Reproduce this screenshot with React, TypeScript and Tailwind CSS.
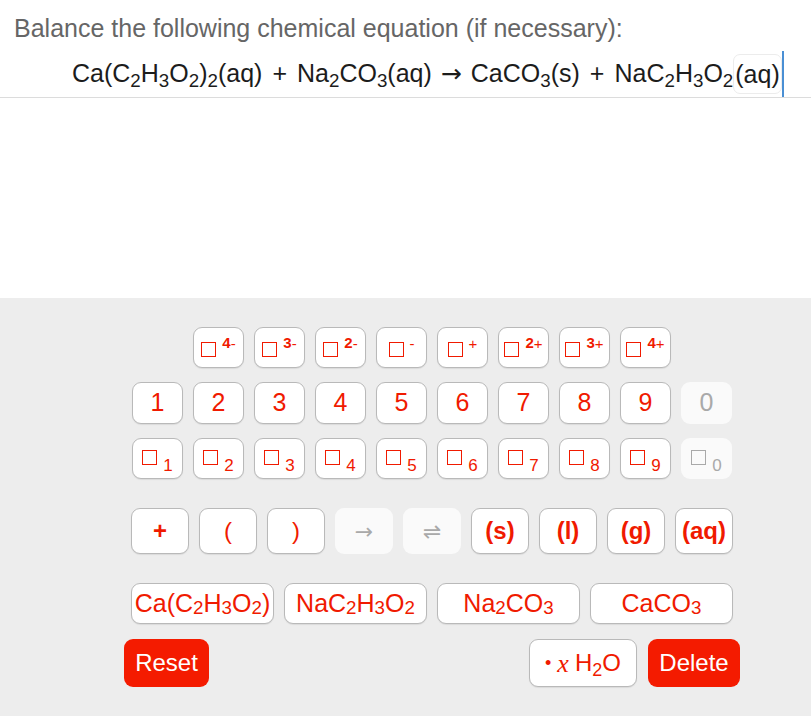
import type { ReactNode } from 'react'

const RED = 'text-[#f01a00]'
const KEY = 'bg-white border border-[#b9b9b9] rounded-[9px] shadow-[0_1px_1px_rgba(0,0,0,0.08)] flex items-center justify-center'
const OFF = 'bg-[#fafafa] rounded-[9px] flex items-center justify-center text-[#a9a9a9]'
const ARROW = { fontFamily: '"DejaVu Sans", sans-serif' }

const CHARGES: [string, string][] = [
  ['4', '-'], ['3', '-'], ['2', '-'], ['', '-'], ['', '+'], ['2', '+'], ['3', '+'], ['4', '+'],
]

function Box({ gray }: { gray?: boolean }) {
  return (
    <span
      className={`inline-block w-[15px] h-[15px] border-[1.5px] ${gray ? 'border-[#a9a9a9]' : 'border-[#f01a00]'}`}
    />
  )
}

function ChargeKey({ n, sign }: { n: string; sign: string }) {
  return (
    <button type="button" className={`w-[51px] h-[41px] ${KEY} ${RED}`}>
      <span className="mt-[4px] flex"><Box /></span>
      <span className="ml-[6px] -mt-[10px] text-[15px] leading-none flex items-start">
        <span className="font-bold">{n}</span>
        <span className="mt-[1px]">{sign}</span>
      </span>
    </button>
  )
}

function SubKey({ n, gray }: { n: number; gray?: boolean }) {
  return (
    <button type="button" className={`w-[51px] h-[41px] ${gray ? OFF : `${KEY} ${RED}`}`}>
      <span className="-mt-[2px] flex"><Box gray={gray} /></span>
      <span className="ml-[6px] mt-[14px] text-[17px] leading-none">{n}</span>
    </button>
  )
}

function Key({ children, w, bold, off, size = 'text-[25px]' }: { children: ReactNode; w: string; bold?: boolean; off?: boolean; size?: string }) {
  return (
    <button
      type="button"
      className={`${w} h-full ${size} ${bold ? 'font-bold' : ''} ${off ? OFF : `${KEY} ${RED}`} whitespace-nowrap`}
    >
      {children}
    </button>
  )
}

export default function App() {
  return (
    <div className="w-[811px] h-[716px] overflow-hidden bg-white" style={{ fontFamily: '"Liberation Sans", Arial, sans-serif' }}>
      <div className="h-[298px]">
        <div className="h-[51px] pt-[13px] pl-[14px] text-[25px] leading-[30px] text-[#666666] whitespace-nowrap">
          Balance the following chemical equation (if necessary):
        </div>
        <div className="h-[47px] flex items-center pl-[72px] border-b border-[#dcdcdc] text-[25px] text-[#1c1c1c] whitespace-nowrap">
          <span>
            Ca(C<sub>2</sub>H<sub>3</sub>O<sub>2</sub>)<sub>2</sub>(aq)<span className="px-[10px]">+</span>Na<sub>2</sub>CO<sub>3</sub>(aq)
            <span style={ARROW} className="px-[9px] text-[25px]">→</span>
            CaCO<sub>3</sub>(s)<span className="px-[10px]">+</span>NaC<sub>2</sub>H<sub>3</sub>O<sub>2</sub>
          </span>
          <span className="rounded-[7px] border border-[#ececec] px-[1px] leading-[38px]">(aq)</span>
          <span className="inline-block w-[2px] h-[46px] bg-[#4a8fd4]" />
        </div>
      </div>

      <div className="h-[418px] bg-[#ededed] pt-[29px]">
        <div className="ml-[124px] w-[616px] flex flex-col">
          <div className="flex justify-center gap-[10px]">
            {CHARGES.map(([n, s], i) => <ChargeKey key={i} n={n} sign={s} />)}
          </div>

          <div className="mt-[14px] h-[42px] flex justify-center gap-[10px]">
            {[1, 2, 3, 4, 5, 6, 7, 8, 9].map(d => (
              <Key key={d} w="w-[51px]">{d}</Key>
            ))}
            <Key w="w-[51px]" off>0</Key>
          </div>

          <div className="mt-[14px] flex justify-center gap-[10px]">
            {[1, 2, 3, 4, 5, 6, 7, 8, 9].map(d => <SubKey key={d} n={d} />)}
            <SubKey n={0} gray />
          </div>

          <div className="mt-[29px] h-[46px] flex justify-center gap-[10px]">
            <Key w="w-[58px]" bold size="text-[24px]">+</Key>
            <Key w="w-[58px]" size="text-[24px]">(</Key>
            <Key w="w-[58px]" size="text-[24px]">)</Key>
            <Key w="w-[58px]" off><span style={ARROW} className="text-[22px]">→</span></Key>
            <Key w="w-[58px]" off><span style={ARROW} className="text-[22px]">⇌</span></Key>
            <Key w="w-[58px]" bold size="text-[24px]">(s)</Key>
            <Key w="w-[58px]" bold size="text-[24px]">(l)</Key>
            <Key w="w-[58px]" bold size="text-[24px]">(g)</Key>
            <Key w="w-[58px]" bold size="text-[24px]">(aq)</Key>
          </div>

          <div className="mt-[29px] h-[41px] flex justify-center gap-[10px]">
            <Key w="w-[143px]">Ca(C<sub>2</sub>H<sub>3</sub>O<sub>2</sub>)</Key>
            <Key w="w-[143px]">NaC<sub>2</sub>H<sub>3</sub>O<sub>2</sub></Key>
            <Key w="w-[143px]">Na<sub>2</sub>CO<sub>3</sub></Key>
            <Key w="w-[143px]">CaCO<sub>3</sub></Key>
          </div>

          <div className="mt-[15px] h-[48px] flex justify-between">
            <button type="button" className="w-[85px] h-full rounded-[9px] bg-[#f41b00] text-white text-[24px]">
              Reset
            </button>
            <div className="flex gap-[11px]">
              <button type="button" className={`w-[108px] h-full ${KEY} ${RED} text-[24px] gap-[6px]`}>
                <span className="text-[18px]">•</span>
                <span className="italic text-[26px]" style={{ fontFamily: '"Liberation Serif", serif' }}>x</span>
                <span>H<sub>2</sub>O</span>
              </button>
              <button type="button" className="w-[92px] h-full rounded-[9px] bg-[#f41b00] text-white text-[24px]">
                Delete
              </button>
            </div>
          </div>
        </div>
      </div>
    </div>
  )
}
